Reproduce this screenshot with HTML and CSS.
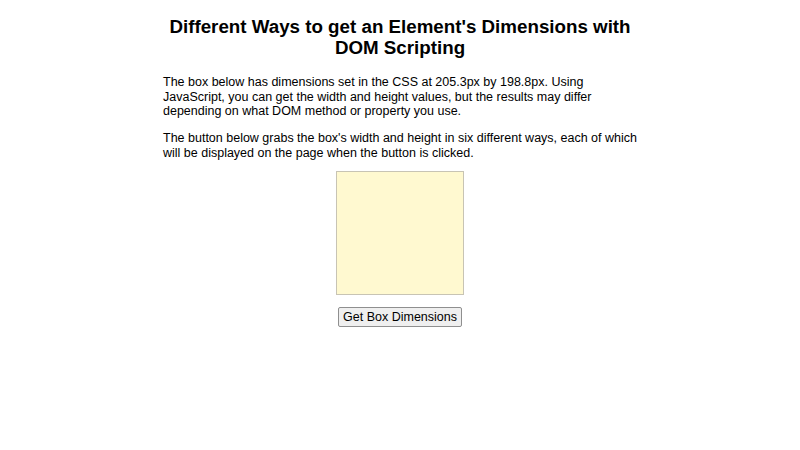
FILE: index.html
```html
<!DOCTYPE html>
<html lang="en">
<head>
    <meta charset="UTF-8">
    <meta name="viewport" content="width=device-width, initial-scale=1.0">
    <title>Element Dimensions</title>
    <link rel="stylesheet" href="styles.css">
</head>
<body>
    <div class="wrapper">
        <h1>Different Ways to get an Element's Dimensions with DOM Scripting</h1>

        <p>The box below has dimensions set in the CSS at 205.3px by 198.8px. Using JavaScript, you can get the width and height values, but the results may differ depending on what DOM method or property you use.</p>

        <p class="last">The button below grabs the box's width and height in six different ways, each of which will be displayed on the page when the button is clicked.</p>

        <div class="box" id="box"></div>

        <div class="controls">
            <button type="button" id="getDims">Get Box Dimensions</button>
        </div>
    </div>
</body>
</html>
```

FILE: styles.css
```css
body {
    font-family: "Liberation Sans", Arial, sans-serif;
    background-color: #fff;
    color: #000;
    margin: 0;
}
.wrapper {
    width: 480px;
    margin: 0 auto;
    padding-top: 16px;
}
h1 {
    font-size: 18.75px;
    line-height: 21px;
    text-align: center;
    margin: 0 0 17px;
}
p {
    font-size: 12.5px;
    line-height: 14.5px;
    margin: 0 -4px 12.5px 3px;
}
p.last {
    margin-bottom: 10.5px;
}
.box {
    width: 126px;
    height: 122px;
    margin: 0 auto;
    background-color: #fff9d0;
    border: 1px solid #c8c4b4;
}
.controls {
    text-align: center;
    margin-top: 12px;
}
button {
    font-family: "Liberation Sans", Arial, sans-serif;
    font-size: 12.5px;
    color: #000;
    background-color: #efefef;
    border: 1px solid #8f8f8f;
    border-radius: 2px;
    padding: 2px 4px;
    height: 20px;
    cursor: pointer;
}
```
